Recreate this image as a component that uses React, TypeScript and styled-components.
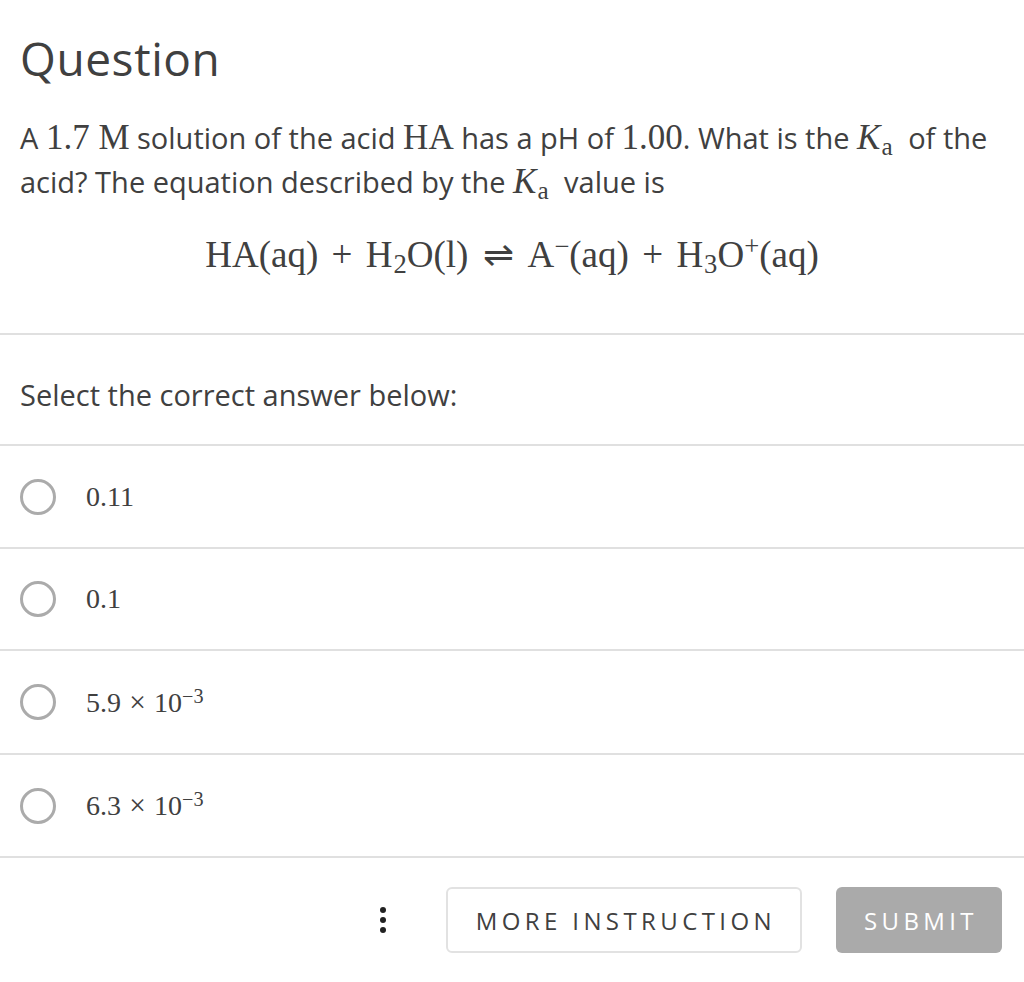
import React from "react";
import styled, { createGlobalStyle } from "styled-components";

const Global = createGlobalStyle`
  html, body { margin: 0; padding: 0; background: #fff; }
  body { font-family: "Open Sans", "Liberation Sans", sans-serif; color: #404040; }
`;

const Page = styled.div`
  width: 1024px;
  display: flex;
  flex-direction: column;
`;

const Header = styled.div`
  padding: 27px 20px 0 20px;
`;

const Title = styled.h1`
  margin: 0;
  font-weight: 400;
  font-size: 46px;
  line-height: 62px;
  letter-spacing: 0.6px;
  color: #404040;
`;

const Prompt = styled.p`
  margin: 27px 0 0 0;
  font-size: 29px;
  line-height: 44px;
  color: #404040;
`;

const M = styled.span<{ $size?: number }>`
  font-family: "Liberation Serif", "Times New Roman", serif;
  font-size: ${(p) => p.$size ?? 35}px;
  color: #404040;
`;

const Ka = styled(M)`
  margin-right: 8px;
`;

const I = styled.i`
  font-style: italic;
`;

const Sub = styled.sub`
  font-size: 0.72em;
  vertical-align: -0.22em;
  line-height: 0;
  margin-left: 1px;
`;

const Sup = styled.sup`
  font-size: 0.72em;
  vertical-align: 0.45em;
  line-height: 0;
`;

const Op = styled.span<{ $gap?: number }>`
  margin: 0 ${(p) => p.$gap ?? 0.36}em;
`;

const Equation = styled.div`
  display: flex;
  justify-content: center;
  margin: 28px 0 0 0;
  line-height: 46px;
  padding-bottom: 55px;
`;

const Section = styled.div<{ $h: number; $top?: number }>`
  height: ${(p) => p.$h}px;
  border-top: 2px solid #e0e0e0;
  display: flex;
  align-items: center;
  padding: ${(p) => p.$top ?? 0}px 20px 0 20px;
  box-sizing: border-box;
`;

const Instruction = styled.div`
  font-size: 29px;
  color: #404040;
`;

const Radio = styled.span`
  width: 36px;
  height: 36px;
  box-sizing: border-box;
  border: 3px solid #ababab;
  border-radius: 50%;
  flex: none;
`;

const OptionText = styled.span`
  margin-left: 30px;
  font-family: "Liberation Serif", "Times New Roman", serif;
  font-size: 28px;
  color: #404040;
`;

const Times = styled.span`
  margin: 0 0.28em;
  font-size: 1.05em;
`;

const Footer = styled.div`
  border-top: 2px solid #e0e0e0;
  display: flex;
  align-items: center;
  justify-content: flex-end;
  padding: 29px 22px 0 0;
`;

const Kebab = styled.button`
  border: none;
  background: none;
  padding: 0;
  display: flex;
  flex-direction: column;
  gap: 4px;
  margin-right: 60px;
  span {
    width: 6px;
    height: 6px;
    border-radius: 50%;
    background: #222;
  }
`;

const Btn = styled.button<{ $primary?: boolean }>`
  height: 66px;
  border-radius: 6px;
  font-family: "Open Sans", "Liberation Sans", sans-serif;
  font-size: 24px;
  letter-spacing: 4.4px;
  padding: 0 24px 0 28px;
  margin-left: ${(p) => (p.$primary ? 34 : 0)}px;
  border: ${(p) => (p.$primary ? "none" : "2px solid #e2e2e2")};
  background: ${(p) => (p.$primary ? "#aaaaaa" : "#fff")};
  color: ${(p) => (p.$primary ? "#fff" : "#404040")};
`;

const options: React.ReactNode[] = [
  "0.11",
  "0.1",
  <>5.9<Times>×</Times>10<Sup>−3</Sup></>,
  <>6.3<Times>×</Times>10<Sup>−3</Sup></>,
];

const heights = [103, 102, 104, 103];

export default function App() {
  return (
    <Page>
      <Global />
      <Header>
        <Title>Question</Title>
        <Prompt>
          A <M>1.7 M</M> solution of the acid <M>HA</M> has a pH of <M>1.00</M>. What is the{" "}
          <Ka><I>K</I><Sub>a</Sub></Ka> of the acid? The equation described by the{" "}
          <Ka><I>K</I><Sub>a</Sub></Ka> value is
        </Prompt>
        <Equation>
          <M $size={37}>
            HA(aq)<Op>+</Op>H<Sub>2</Sub>O(l)<Op $gap={0.38}>⇌</Op>A<Sup>−</Sup>(aq)<Op>+</Op>H<Sub>3</Sub>O<Sup>+</Sup>(aq)
          </M>
        </Equation>
      </Header>
      <Section $h={111} $top={10}>
        <Instruction>Select the correct answer below:</Instruction>
      </Section>
      {options.map((o, i) => (
        <Section key={i} $h={heights[i]}>
          <Radio />
          <OptionText>{o}</OptionText>
        </Section>
      ))}
      <Footer>
        <Kebab aria-label="more">
          <span />
          <span />
          <span />
        </Kebab>
        <Btn>MORE INSTRUCTION</Btn>
        <Btn $primary>SUBMIT</Btn>
      </Footer>
    </Page>
  );
}
